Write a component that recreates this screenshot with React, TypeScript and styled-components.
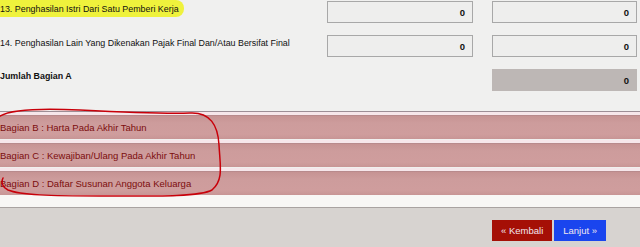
import React from "react";
import styled, { createGlobalStyle } from "styled-components";

const Global = createGlobalStyle`
  html, body { margin: 0; padding: 0; background: #f0f0ef; }
  body { font-family: "Liberation Sans", Arial, sans-serif; }
`;

const Page = styled.div`
  position: relative;
  width: 640px;
  height: 247px;
  overflow: hidden;
  background: #f0f0ef;
  display: flex;
  flex-direction: column;
`;

const Form = styled.div`
  display: flex;
  flex-direction: column;
  gap: 12px;
  padding-top: 1px;
  height: 111px;
  box-sizing: border-box;
`;

const Row = styled.div`
  display: grid;
  grid-template-columns: 327px 146px 164px;
  height: 22px;
  & > :nth-child(3) {
    margin-left: 19px;
  }
`;

const Label = styled.div<{ $bold?: boolean }>`
  font-size: 8.9px;
  font-weight: ${(p) => (p.$bold ? 700 : 400)};
  color: #111;
  padding-top: ${(p) => (p.$bold ? "2px" : "3px")};
  white-space: nowrap;
`;

const Marker = styled.span`
  background: #eff23c;
  border-radius: 0 8px 8px 0;
  padding: 4px 5px 3px 0;
  margin-top: -4px;
  display: inline-block;
`;

const Field = styled.div<{ $total?: boolean }>`
  box-sizing: border-box;
  height: 22px;
  background: ${(p) => (p.$total ? "#bdb7b5" : "#eeeeed")};
  border: 1px solid ${(p) => (p.$total ? "#bdb7b5" : "#a8a8a8")};
  display: flex;
  align-items: center;
  justify-content: flex-end;
  padding-right: 7px;
  font-size: 9.5px;
  font-weight: 700;
  color: #111;
`;

const Sections = styled.div`
  border-top: 1px solid #9d8e96;
  display: flex;
  flex-direction: column;
`;

const Band = styled.div<{ $gap: string }>`
  margin-top: ${(p) => p.$gap};
  height: 24px;
  box-sizing: border-box;
  background: linear-gradient(#c69393, #cd9c9c 30%, #cf9d9d 80%, #c89595);
  border-top: 1px solid #b88a8c;
  display: flex;
  align-items: center;
  font-size: 9.5px;
  color: #7c0d0d;
  white-space: nowrap;
  box-shadow: 0 -3px 0 #f6e6ea;
`;

const Spacer = styled.div`
  height: 12px;
  background: #f8f7f5;
  border-bottom: 1px solid #a9a3a1;
`;

const Footer = styled.div`
  flex: 1;
  background: #d7d3d0;
  display: flex;
  justify-content: flex-start;
  align-items: flex-start;
  padding: 12px 0 0 492px;
  gap: 2px;
`;

const Button = styled.div<{ $bg: string }>`
  height: 21px;
  box-sizing: border-box;
  background: ${(p) => p.$bg};
  color: #f1e6ee;
  font-size: 9.5px;
  display: flex;
  align-items: center;
  justify-content: center;
  padding: 0 9px;
`;

const Circle = styled.svg`
  position: absolute;
  left: 0;
  top: 0;
  pointer-events: none;
`;

export default function App() {
  return (
    <>
      <Global />
      <Page>
        <Form>
          <Row>
            <Label>
              <Marker>13. Penghasilan Istri Dari Satu Pemberi Kerja</Marker>
            </Label>
            <Field>0</Field>
            <Field>0</Field>
          </Row>
          <Row>
            <Label>14. Penghasilan Lain Yang Dikenakan Pajak Final Dan/Atau Bersifat Final</Label>
            <Field>0</Field>
            <Field>0</Field>
          </Row>
          <Row>
            <Label $bold>Jumlah Bagian A</Label>
            <div />
            <Field $total>0</Field>
          </Row>
        </Form>
        <Sections>
          <Band $gap="3px">Bagian B : Harta Pada Akhir Tahun</Band>
          <Band $gap="4px">Bagian C : Kewajiban/Ulang Pada Akhir Tahun</Band>
          <Band $gap="4px">Bagian D : Daftar Susunan Anggota Keluarga</Band>
        </Sections>
        <Spacer />
        <Footer>
          <Button $bg="#a50f06">« Kembali</Button>
          <Button $bg="#1a45ee">Lanjut »</Button>
        </Footer>
        <Circle width="640" height="247" viewBox="0 0 640 247">
          <path
            d="M0,116 C10,110 40,108 80,110 C120,112 160,114 190,113 C210,112 218,125 219,145 C220,165 224,180 212,190 C200,197 150,196 100,196 C50,196 20,195 8,190 C2,187 1,182 3,178"
            fill="none"
            stroke="#c8000a"
            strokeWidth="1.5"
            strokeLinecap="round"
          />
        </Circle>
      </Page>
    </>
  );
}
